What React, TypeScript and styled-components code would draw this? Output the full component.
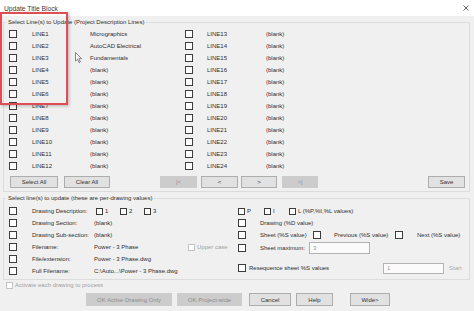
import { FC, Fragment } from "react";
import styled, { createGlobalStyle } from "styled-components";

const GlobalStyle = createGlobalStyle`
  body {
    margin: 0;
    background: #f0f0f0;
  }
`;

//Dialog frame
const Window = styled.div`
  position: relative;
  width: 474px;
  height: 311px;
  overflow: hidden;
  background: #f0f0f0;
  font-family: "Liberation Sans", Arial, sans-serif;
  font-size: 6px;
  color: #2e2e2e;
`;

const TitleBar = styled.div`
  display: flex;
  align-items: center;
  justify-content: space-between;
  height: 16px;
  padding: 0 5px 0 4px;
  background: #fff;
  font-size: 6.7px;
  color: #3a3a3a;
`;

const Group = styled.fieldset<{ $bottom?: number }>`
  margin: 2px 4px 0 3px;
  padding: 0 0 ${(p) => p.$bottom ?? 3}px;
  border: 1px solid #dcdcdc;
  min-width: 0;
`;

const Caption = styled.legend`
  margin-left: 2px;
  padding: 0 2px;
  line-height: 8px;
`;

const LinesGrid = styled.div`
  display: grid;
  grid-template-columns: 23px 58px 95px 22px 59px 1fr;
  grid-auto-rows: 12px;
  align-items: center;
  margin-top: 2px;
  padding-left: 5px;
  white-space: nowrap;
`;

const Box = styled.span<{ $size?: number; $off?: boolean }>`
  display: inline-block;
  box-sizing: border-box;
  flex: none;
  width: ${(p) => p.$size ?? 8}px;
  height: ${(p) => p.$size ?? 8}px;
  border: 1px solid ${(p) => (p.$off ? "#c4c4c4" : "#3c3c3c")};
  background: #fff;
`;

const ButtonRow = styled.div<{ $top: number; $left: number }>`
  display: flex;
  align-items: center;
  margin-top: ${(p) => p.$top}px;
  padding-left: ${(p) => p.$left}px;
  padding-right: 4px;
`;

const Button = styled.div<{ $w: number; $h?: number; $gap?: number; $off?: boolean }>`
  display: flex;
  align-items: center;
  justify-content: center;
  box-sizing: border-box;
  width: ${(p) => p.$w}px;
  height: ${(p) => p.$h ?? 12}px;
  margin-left: ${(p) => p.$gap ?? 0}px;
  border: 1px solid ${(p) => (p.$off ? "#cccccc" : "#adadad")};
  background: ${(p) => (p.$off ? "#cccccc" : "#e1e1e1")};
  color: ${(p) => (p.$off ? "#8c8c8c" : "#333")};
  white-space: nowrap;
`;

const Spacer = styled.div`
  flex: 1;
`;

const DrawingArea = styled.div`
  display: flex;
  margin-top: 3px;
  white-space: nowrap;
`;

const LeftFields = styled.div`
  display: grid;
  grid-template-columns: 23px 62px 1fr;
  grid-auto-rows: 12px;
  align-items: center;
  width: 234px;
  padding-left: 5px;
`;

const Value = styled.div`
  display: flex;
  align-items: center;
`;

const Inline = styled.span<{ $w?: number; $lead?: number; $off?: boolean }>`
  display: inline-flex;
  align-items: center;
  gap: 2px;
  width: ${(p) => (p.$w ? `${p.$w}px` : "auto")};
  margin-left: ${(p) => p.$lead ?? 0}px;
  flex: none;
  color: ${(p) => (p.$off ? "#a0a0a0" : "inherit")};
`;

const RightFields = styled.div`
  display: flex;
  flex-direction: column;
  flex: 1;
`;

const FieldRow = styled.div<{ $h?: number; $top?: number }>`
  display: flex;
  align-items: center;
  height: ${(p) => p.$h ?? 12}px;
  margin-top: ${(p) => p.$top ?? 0}px;
`;

const Cell = styled.span<{ $w: number; $lead?: number; $off?: boolean }>`
  display: inline-flex;
  align-items: center;
  flex: none;
  width: ${(p) => p.$w}px;
  margin-left: ${(p) => p.$lead ?? 0}px;
  color: ${(p) => (p.$off ? "#a8a8a8" : "inherit")};
`;

const Field = styled.div<{ $w: number; $h: number }>`
  display: flex;
  align-items: center;
  box-sizing: border-box;
  width: ${(p) => p.$w}px;
  height: ${(p) => p.$h}px;
  padding-left: 3px;
  border: 1px solid #b3b3b3;
  background: #fbfbfb;
  color: #9a9a9a;
  flex: none;
`;

const ActivateRow = styled.div`
  display: flex;
  align-items: center;
  gap: 2px;
  height: 10px;
  padding-left: 6px;
  color: #a0a0a0;
`;

const Highlight = styled.div`
  position: absolute;
  left: 0;
  top: 12px;
  width: 68px;
  height: 93px;
  box-sizing: border-box;
  border: 2px solid #dd4e56;
  box-shadow: 1px 1px 3px rgba(0, 0, 0, 0.25);
  pointer-events: none;
`;

const Pointer = styled.svg`
  position: absolute;
  left: 75px;
  top: 52px;
`;

const lines = Array.from({ length: 12 }, (_, i) => ({
  left: `LINE${i + 1}`,
  leftValue: ["Micrographics", "AutoCAD Electrical", "Fundamentals"][i] ?? "(blank)",
  right: `LINE${i + 13}`,
}));

const drawingFields = [
  { label: "Drawing Description:", value: null },
  { label: "Drawing Section:", value: "(blank)" },
  { label: "Drawing Sub-section:", value: "(blank)" },
  { label: "Filename:", value: "Power - 3 Phase", upper: true },
  { label: "File/extension:", value: "Power - 3 Phase.dwg" },
  { label: "Full Filename:", value: "C:\\Auto...\\Power - 3 Phase.dwg" },
];

const UpdateTitleBlock: FC = () => {
  return (
    <Window>
      <TitleBar>
        <span>Update Title Block</span>
        <svg width="6" height="6" viewBox="0 0 6 6">
          <path d="M0.5 0.5 L5.5 5.5 M5.5 0.5 L0.5 5.5" stroke="#444" strokeWidth="0.8" />
        </svg>
      </TitleBar>

      <Group>
        <Caption>Select Line(s) to Update (Project Description Lines)</Caption>
        <LinesGrid>
          {lines.map((line) => (
            <Fragment key={line.left}>
              <Box />
              <span>{line.left}</span>
              <span>{line.leftValue}</span>
              <Box />
              <span>{line.right}</span>
              <span>(blank)</span>
            </Fragment>
          ))}
        </LinesGrid>
        <ButtonRow $top={4} $left={6}>
          <Button $w={48}>Select All</Button>
          <Button $w={46} $gap={6}>Clear All</Button>
          <Button $w={37} $gap={50} $off>|&lt;</Button>
          <Button $w={37} $gap={4}>&lt;</Button>
          <Button $w={36} $gap={3}>&gt;</Button>
          <Button $w={36} $gap={5} $off>&gt;|</Button>
          <Spacer />
          <Button $w={37}>Save</Button>
        </ButtonRow>
      </Group>

      <Group $bottom={2}>
        <Caption>Select line(s) to update (these are per-drawing values)</Caption>
        <DrawingArea>
          <LeftFields>
            {drawingFields.map((f) => (
              <Fragment key={f.label}>
                <Box />
                <span>{f.label}</span>
                <Value>
                  {f.value === null ? (
                    <>
                      <Inline $w={24} $lead={2}><Box $size={7} />1</Inline>
                      <Inline $w={24}><Box $size={7} />2</Inline>
                      <Inline><Box $size={7} />3</Inline>
                    </>
                  ) : (
                    <>
                      <Inline $w={94}>{f.value}</Inline>
                      {f.upper && (
                        <Inline $off>
                          <Box $size={7} $off />
                          Upper case
                        </Inline>
                      )}
                    </>
                  )}
                </Value>
              </Fragment>
            ))}
          </LeftFields>

          <RightFields>
            <FieldRow>
              <Inline $w={26}><Box $size={7} />P</Inline>
              <Inline $w={25}><Box $size={7} />I</Inline>
              <Inline><Box $size={7} />L (%P,%I,%L values)</Inline>
            </FieldRow>
            <FieldRow>
              <Cell $w={22}><Box /></Cell>
              <span>Drawing (%D value)</span>
            </FieldRow>
            <FieldRow>
              <Cell $w={22}><Box /></Cell>
              <Cell $w={53}>Sheet (%S value)</Cell>
              <Cell $w={21}><Box /></Cell>
              <Cell $w={61}>Previous (%S value)</Cell>
              <Cell $w={22}><Box /></Cell>
              <span>Next (%S value)</span>
            </FieldRow>
            <FieldRow $h={13}>
              <Cell $w={22}><Box /></Cell>
              <Cell $w={49}>Sheet maximum:</Cell>
              <Field $w={61} $h={12}>3</Field>
            </FieldRow>
            <FieldRow $top={8}>
              <Cell $w={11}><Box /></Cell>
              <Cell $w={134}>Resequence sheet %S values</Cell>
              <Field $w={61} $h={11}>1</Field>
              <Cell $w={20} $lead={5} $off>Start</Cell>
            </FieldRow>
          </RightFields>
        </DrawingArea>
      </Group>

      <ActivateRow>
        <Box $size={7} $off />
        Activate each drawing to process
      </ActivateRow>

      <ButtonRow $top={3} $left={86}>
        <Button $w={86} $h={13} $off>OK Active Drawing Only</Button>
        <Button $w={65} $h={13} $gap={5} $off>OK Project-wide</Button>
        <Button $w={42} $h={13} $gap={7}>Cancel</Button>
        <Button $w={37} $h={13} $gap={5}>Help</Button>
        <Button $w={40} $h={13} $gap={17}>Wide&gt;</Button>
      </ButtonRow>

      <Highlight />
      <Pointer width="8" height="12" viewBox="0 0 8 12">
        <path
          d="M0.5 0.5 L0.5 9 L2.6 7.2 L4 10.6 L5.3 10 L3.9 6.7 L6.6 6.7 Z"
          fill="#fff"
          stroke="#555"
          strokeWidth="0.7"
        />
      </Pointer>
    </Window>
  );
};

export default function App() {
  return (
    <>
      <GlobalStyle />
      <UpdateTitleBlock />
    </>
  );
}
